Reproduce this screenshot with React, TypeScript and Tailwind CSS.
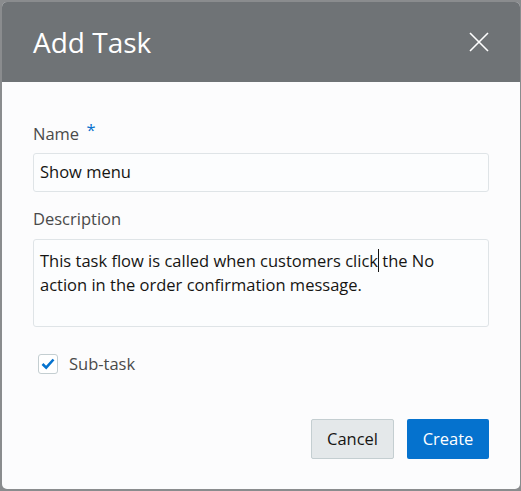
import { useState } from 'react';

export default function App(): JSX.Element {
  const [subTask, setSubTask] = useState(true);

  return (
    <div
      className="h-[491px] w-[521px] bg-[#8a8c8e] pl-[2px] pt-[2px]"
      style={{ fontFamily: '"Open Sans", "Noto Sans", sans-serif' }}
    >
      <div className="flex h-[487px] w-[518px] flex-col overflow-hidden rounded-[5px] bg-[#fcfcfd]">
        {/* header */}
        <div className="flex h-[80px] shrink-0 items-center justify-between bg-[#6f7376] px-[31px]">
          <h1 className="text-[28px] leading-none text-white">Add Task</h1>
          <button className="flex h-[20px] w-[20px] items-center justify-center text-white">
            <svg width="20" height="20" viewBox="0 0 20 20" fill="none" stroke="currentColor" strokeWidth="1.6">
              <path d="M1 1 L19 19 M19 1 L1 19" />
            </svg>
          </button>
        </div>

        {/* body */}
        <div className="flex flex-col px-[31px] pt-[40px]">
          <label className="text-[16.5px] leading-[24px] text-[#4a4a4a]">
            Name <span className="relative -top-[4px] ml-[3px] text-[#0572ce]">*</span>
          </label>
          <div className="mt-[7px] flex h-[39px] items-center rounded-[3px] border border-[#dfe4e7] bg-[#fcfdfe] px-[6px] text-[16.5px] text-[#161513]">
            Show menu
          </div>

          <label className="mt-[15px] text-[16.5px] leading-[24px] text-[#4a4a4a]">Description</label>
          <div className="mt-[8px] h-[88px] rounded-[3px] border border-[#dfe4e7] bg-[#fcfdfe] pl-[6px] pr-[30px] pt-[9px] text-[16.5px] leading-[24px] text-[#161513]">
            This task flow is called when customers{' '}
            {/* text caret drawn as a shadow so it takes no room */}
            <span className="shadow-[1px_0_0_#161513]">click</span> the No action in the order
            confirmation message.
          </div>

          <label className="mt-[25px] flex cursor-pointer items-center pl-[5px]">
            <span
              className="flex h-[20px] w-[20px] items-center justify-center rounded-[3px] border border-[#c4ced1] bg-white"
              onClick={() => setSubTask(!subTask)}
            >
              {subTask && (
                <svg width="14" height="12" viewBox="0 0 14 12" fill="none" stroke="#0572ce" strokeWidth="2.6">
                  <path d="M1.5 6 L5.2 9.6 L12.5 1.5" />
                </svg>
              )}
            </span>
            <span className="ml-[11px] text-[16.5px] leading-[24px] text-[#4a4a4a]">Sub-task</span>
          </label>

          <div className="mt-[43px] flex justify-end gap-[13px]">
            <button className="h-[40px] w-[83px] rounded-[2px] border border-[#c4ced1] bg-[#e4e8ea] text-[16.5px] text-[#161513]">
              Cancel
            </button>
            <button className="h-[40px] w-[82px] rounded-[2px] bg-[#0572ce] text-[16.5px] text-white">
              Create
            </button>
          </div>
        </div>
      </div>
    </div>
  );
}
